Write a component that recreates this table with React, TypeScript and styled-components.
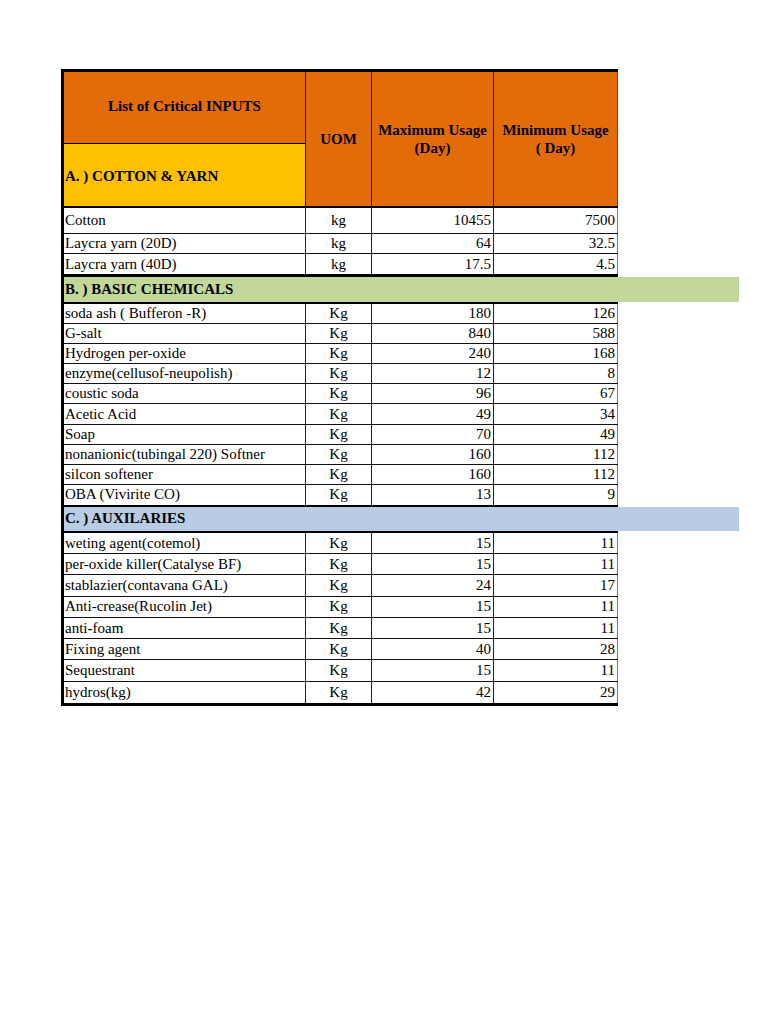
import styled, { createGlobalStyle } from "styled-components";

const GlobalStyle = createGlobalStyle`
    html, body {
        margin: 0;
        padding: 0;
        background: #ffffff;
    }

    body {
        font-family: "Liberation Serif", "Times New Roman", serif;
        font-size: 15px;
        color: #000;
    }
`;

const COLUMNS = "242px 66px 122px 124px";

const Sheet = styled.div`
    margin: 69px 0 0 61px;
    width: 678px;
    border-left: 3px solid #000;
    display: flex;
    flex-direction: column;
`;

const Header = styled.div`
    display: grid;
    grid-template-columns: ${COLUMNS};
    grid-template-rows: 72px 62px;
    width: 554px;
    border-top: 3px solid #000;
    border-bottom: 2px solid #000;
    font-weight: bold;
`;

const HeadCell = styled.div<{ $bg: string; $col: number; $last?: boolean }>`
    box-sizing: border-box;
    background: ${(p) => p.$bg};
    grid-column: ${(p) => p.$col};
    grid-row: 1 / 3;
    border-right: 1px solid ${(p) => (p.$last ? "#6b4a2a" : "#2a1a0a")};
    display: flex;
    align-items: center;
    justify-content: center;
    text-align: center;
    line-height: 18px;
`;

const TitleCell = styled(HeadCell)`
    grid-row: 1;
    border-bottom: 1px solid #000;
    padding-bottom: 4px;
`;

const CategoryCell = styled(HeadCell)`
    grid-row: 2;
    justify-content: flex-start;
    padding-left: 1px;
    padding-top: 2px;
`;

const Group = styled.div<{ $top: number; $bottom: number }>`
    width: 554px;
    border-top: ${(p) => p.$top}px solid #000;
    border-bottom: ${(p) => p.$bottom}px solid #000;
`;

const Row = styled.div<{ $h: number }>`
    box-sizing: border-box;
    display: grid;
    grid-template-columns: ${COLUMNS};
    height: ${(p) => p.$h}px;
    border-bottom: 1px solid #111;

    &:last-child {
        border-bottom: none;
    }
`;

const Cell = styled.div<{ $align: "left" | "center" | "right"; $last?: boolean }>`
    box-sizing: border-box;
    display: flex;
    align-items: center;
    justify-content: ${(p) =>
        p.$align === "left" ? "flex-start" : p.$align === "right" ? "flex-end" : "center"};
    padding: ${(p) => (p.$align === "right" ? "0 2px 0 0" : p.$align === "left" ? "0 0 0 1px" : "0")};
    border-right: 1px solid ${(p) => (p.$last ? "#7a7a7a" : "#222")};
    white-space: nowrap;
    overflow: hidden;
    line-height: 1;
`;

const Band = styled.div<{ $bg: string; $h: number }>`
    box-sizing: border-box;
    width: 675px;
    height: ${(p) => p.$h}px;
    background: ${(p) => p.$bg};
    display: flex;
    align-items: center;
    padding-left: 1px;
    font-weight: bold;
`;

type Item = [string, string, string, string];

const cotton: Item[] = [
    ["Cotton", "kg", "10455", "7500"],
    ["Laycra yarn (20D)", "kg", "64", "32.5"],
    ["Laycra yarn (40D)", "kg", "17.5", "4.5"],
];

const chemicals: Item[] = [
    ["soda ash ( Bufferon -R)", "Kg", "180", "126"],
    ["G-salt", "Kg", "840", "588"],
    ["Hydrogen per-oxide", "Kg", "240", "168"],
    ["enzyme(cellusof-neupolish)", "Kg", "12", "8"],
    ["coustic soda", "Kg", "96", "67"],
    ["Acetic Acid", "Kg", "49", "34"],
    ["Soap", "Kg", "70", "49"],
    ["nonanionic(tubingal 220) Softner", "Kg", "160", "112"],
    ["silcon softener", "Kg", "160", "112"],
    ["OBA (Vivirite CO)", "Kg", "13", "9"],
];

const auxilaries: Item[] = [
    ["weting agent(cotemol)", "Kg", "15", "11"],
    ["per-oxide killer(Catalyse BF)", "Kg", "15", "11"],
    ["stablazier(contavana GAL)", "Kg", "24", "17"],
    ["Anti-crease(Rucolin Jet)", "Kg", "15", "11"],
    ["anti-foam", "Kg", "15", "11"],
    ["Fixing agent", "Kg", "40", "28"],
    ["Sequestrant", "Kg", "15", "11"],
    ["hydros(kg)", "Kg", "42", "29"],
];

const ItemRow = ({ item, h }: { item: Item; h: number }) => (
    <Row $h={h}>
        <Cell $align="left">{item[0]}</Cell>
        <Cell $align="center">{item[1]}</Cell>
        <Cell $align="right">{item[2]}</Cell>
        <Cell $align="right" $last>
            {item[3]}
        </Cell>
    </Row>
);

const ORANGE = "#e36c0a";

export default function App() {
    const cottonHeights = [26, 20, 20];

    return (
        <>
            <GlobalStyle />
            <Sheet>
                <Header>
                    <TitleCell $bg={ORANGE} $col={1}>
                        List of Critical INPUTS
                    </TitleCell>
                    <HeadCell $bg={ORANGE} $col={2}>
                        UOM
                    </HeadCell>
                    <HeadCell $bg={ORANGE} $col={3}>
                        Maximum Usage
                        <br />
                        (Day)
                    </HeadCell>
                    <HeadCell $bg={ORANGE} $col={4} $last>
                        Minimum Usage
                        <br />( Day)
                    </HeadCell>
                    <CategoryCell $bg="#ffc000" $col={1}>
                        A. ) COTTON &amp; YARN
                    </CategoryCell>
                </Header>

                <Group $top={0} $bottom={3}>
                    {cotton.map((item, i) => (
                        <ItemRow key={item[0]} item={item} h={cottonHeights[i]} />
                    ))}
                </Group>

                <Band $bg="#c4d79b" $h={25}>
                    B. ) BASIC CHEMICALS
                </Band>

                <Group $top={2} $bottom={2}>
                    {chemicals.map((item) => (
                        <ItemRow key={item[0]} item={item} h={20.1} />
                    ))}
                </Group>

                <Band $bg="#b8cce4" $h={24}>
                    C. ) AUXILARIES
                </Band>

                <Group $top={2} $bottom={3}>
                    {auxilaries.map((item) => (
                        <ItemRow key={item[0]} item={item} h={21.25} />
                    ))}
                </Group>
            </Sheet>
        </>
    );
}
